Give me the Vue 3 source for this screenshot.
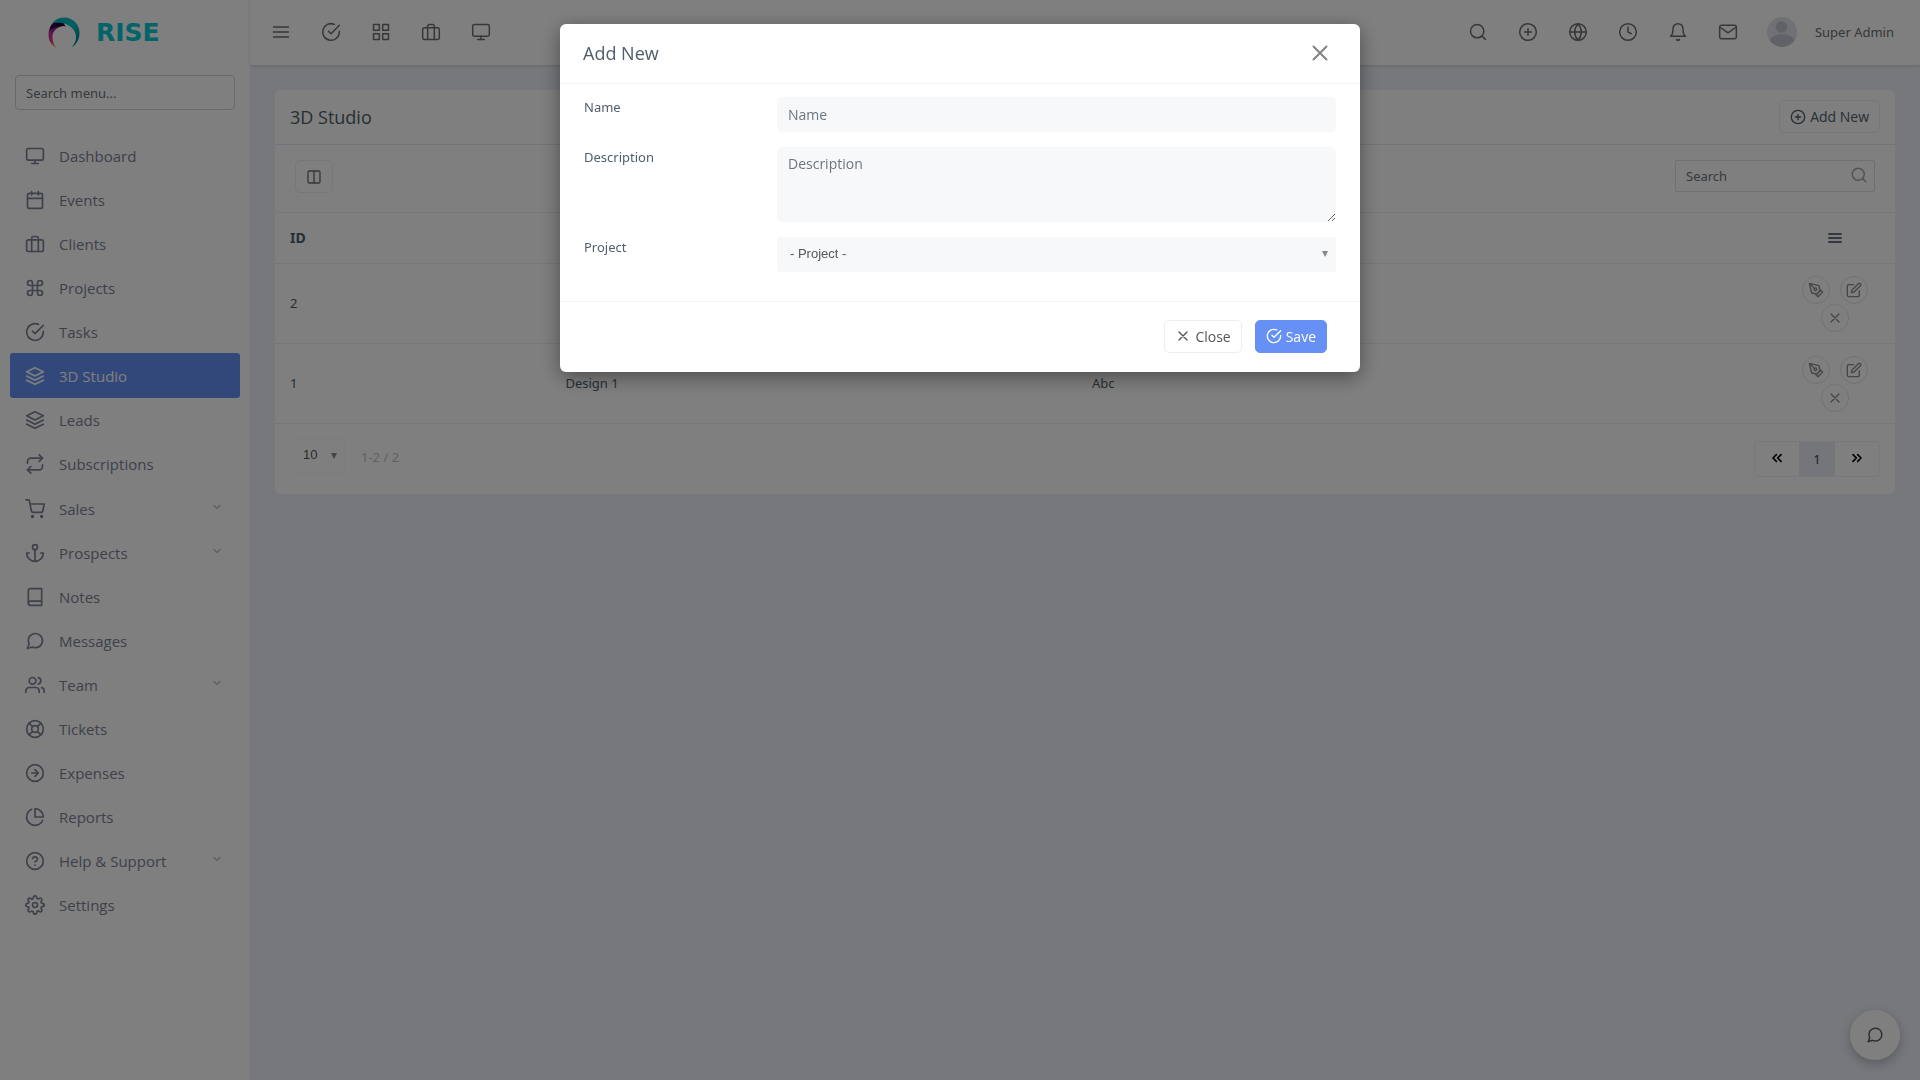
<template>
    <div class="page">
        <aside class="sidebar">
            <a href="#" class="brand">
                <svg class="brand-mark" viewBox="0 0 32 32" aria-hidden="true">
                    <defs>
                        <linearGradient id="ringLeft" x1="0" y1="0" x2="0" y2="1">
                            <stop offset="0" stop-color="#2a0a4a"/>
                            <stop offset="0.4" stop-color="#b0359c"/>
                            <stop offset="0.75" stop-color="#f0308c"/>
                            <stop offset="1" stop-color="#ffc31e"/>
                        </linearGradient>
                        <linearGradient id="ringRight" x1="0" y1="0" x2="1" y2="1">
                            <stop offset="0" stop-color="#00b4b4"/>
                            <stop offset="0.5" stop-color="#00c0c0"/>
                            <stop offset="1" stop-color="#00708c"/>
                        </linearGradient>
                    </defs>
                    <path fill="url(#ringLeft)" d="M8.500 31C2.500 28 .5 22.500.5 17.500.5 12 2.500 8 6 5l10 1 1 3C9 9.500 4.500 14 4.500 20c0 4.500 1.500 8 4 11z"/>
                    <path fill="#26003c" d="M3 9c2-3 4-4.500 7-6l8 6.500C13 8.500 8 9 2 13z"/>
                    <path fill="url(#ringRight)" d="M4 6.500C7 2.500 11 .5 16 .5c9 0 15.500 7 15.500 15.500 0 6.500-3 11.500-8 14.500 3-3.500 4.500-7 4.500-10.500C28 12.500 21 7 13.500 6 10 5.500 7 5.700 4 6.500z"/>
                </svg>
                <span>RISE</span>
            </a>
            <div class="menu-search">
                <input type="text" placeholder="Search menu..." aria-label="Search menu">
            </div>
            <nav class="menu">
                <a v-for="item in menu"
                   :key="item.label"
                   href="#"
                   :class="['menu-item', { active: item.label === activeMenu, spaced: item.spaced }]"
                   @click.prevent="activeMenu = item.label"
                >
                    <svg class="icon" viewBox="0 0 24 24" v-html="icons[item.icon]"></svg>
                    <span>{{ item.label }}</span>
                    <svg v-if="item.children" class="icon caret" viewBox="0 0 24 24" v-html="icons.chevronDown"></svg>
                </a>
            </nav>
        </aside>

        <div class="main">
            <header class="topbar">
                <button v-for="name in leftTools" :key="name" class="tool" :aria-label="name">
                    <svg class="icon" viewBox="0 0 24 24" v-html="icons[name]"></svg>
                </button>
                <div class="spacer"></div>
                <button v-for="name in rightTools" :key="name" class="tool" :aria-label="name">
                    <svg class="icon" viewBox="0 0 24 24" v-html="icons[name]"></svg>
                </button>
                <a href="#" class="user">
                    <svg class="avatar" viewBox="0 0 30 30" aria-hidden="true">
                        <clipPath id="avatarClip"><circle cx="15" cy="15" r="15"/></clipPath>
                        <g clip-path="url(#avatarClip)">
                            <rect width="30" height="30" fill="#e0e2e9"/>
                            <circle cx="14.500" cy="10" r="5.800" fill="#c2c5cf"/>
                            <ellipse cx="15" cy="27" rx="13.500" ry="10" fill="#c2c5cf"/>
                        </g>
                    </svg>
                    <span>Super Admin</span>
                </a>
            </header>

            <main class="content">
                <section class="card">
                    <div class="card-header">
                        <h1>3D Studio</h1>
                        <button class="btn" @click="showModal = true">
                            <svg class="icon" viewBox="0 0 24 24" v-html="icons.plusCircle"></svg>
                            Add New
                        </button>
                    </div>
                    <div class="toolbar">
                        <button class="btn columns-btn" aria-label="Columns">
                            <svg class="icon" viewBox="0 0 24 24" v-html="icons.columns"></svg>
                        </button>
                        <div class="table-search">
                            <input v-model="keyword" type="text" placeholder="Search" aria-label="Search">
                            <svg class="icon" viewBox="0 0 24 24" v-html="icons.search"></svg>
                        </div>
                    </div>
                    <table>
                        <thead>
                            <tr>
                                <th class="col-id">ID</th>
                                <th class="col-title"></th>
                                <th></th>
                                <th class="col-actions">
                                    <svg class="icon" viewBox="0 0 24 24" v-html="icons.menu"></svg>
                                </th>
                            </tr>
                        </thead>
                        <tbody>
                            <tr v-for="row in rows" :key="row.id">
                                <td>{{ row.id }}</td>
                                <td>{{ row.title }}</td>
                                <td>{{ row.description }}</td>
                                <td class="actions-cell">
                                    <div class="actions">
                                        <button v-for="name in rowActions" :key="name" :aria-label="name">
                                            <svg class="icon" viewBox="0 0 24 24" v-html="icons[name]"></svg>
                                        </button>
                                    </div>
                                </td>
                            </tr>
                        </tbody>
                    </table>
                    <div class="card-footer">
                        <div class="select-box page-size">
                            <select v-model="pageSize" aria-label="Page size">
                                <option>10</option>
                            </select>
                            <svg class="arrow" viewBox="0 0 6 6"><path d="M0 0h6L3 6z"/></svg>
                        </div>
                        <span class="range">1-2 / 2</span>
                        <div class="pagination">
                            <button aria-label="Previous">
                                <svg class="icon" viewBox="0 0 24 24" v-html="icons.chevronsLeft"></svg>
                            </button>
                            <button class="current">1</button>
                            <button aria-label="Next">
                                <svg class="icon" viewBox="0 0 24 24" v-html="icons.chevronsRight"></svg>
                            </button>
                        </div>
                    </div>
                </section>
            </main>
        </div>

        <button class="chat" aria-label="Chat">
            <svg class="icon" viewBox="0 0 24 24" v-html="icons.message"></svg>
        </button>

        <div v-if="showModal" class="overlay">
            <form class="modal" role="dialog" aria-labelledby="modalTitle" @submit.prevent="save">
                <div class="modal-header">
                    <h2 id="modalTitle">Add New</h2>
                    <button type="button" class="modal-x" aria-label="Dismiss" @click="showModal = false">
                        <svg class="icon" viewBox="0 0 24 24" v-html="icons.x"></svg>
                    </button>
                </div>
                <div class="modal-body">
                    <div class="field">
                        <label for="name">Name</label>
                        <input id="name" v-model="form.name" type="text" placeholder="Name">
                    </div>
                    <div class="field">
                        <label for="description">Description</label>
                        <textarea id="description" v-model="form.description" placeholder="Description"></textarea>
                    </div>
                    <div class="field">
                        <label for="project">Project</label>
                        <div class="select-box">
                            <select id="project" v-model="form.project">
                                <option value="">- Project -</option>
                            </select>
                            <svg class="arrow" viewBox="0 0 6 6"><path d="M0 0h6L3 6z"/></svg>
                        </div>
                    </div>
                </div>
                <div class="modal-footer">
                    <button type="button" class="btn" @click="showModal = false">
                        <svg class="icon" viewBox="0 0 24 24" v-html="icons.x"></svg>
                        Close
                    </button>
                    <button type="submit" class="btn primary">
                        <svg class="icon" viewBox="0 0 24 24" v-html="icons.checkCircle"></svg>
                        Save
                    </button>
                </div>
            </form>
        </div>
    </div>
</template>

<script setup>
    import { reactive, ref } from 'vue';

    const icons = {
        menu: '<path d="M3 12h18M3 6h18M3 18h18"/>',
        monitor: '<rect x="2" y="3" width="20" height="14" rx="2"/><path d="M8 21h8M12 17v4"/>',
        calendar: '<rect x="3" y="4" width="18" height="18" rx="2"/><path d="M16 2v4M8 2v4M3 10h18"/>',
        briefcase: '<rect x="2" y="7" width="20" height="14" rx="2"/><path d="M16 21V5a2 2 0 0 0-2-2h-4a2 2 0 0 0-2 2v16"/>',
        command: '<path d="M18 3a3 3 0 0 0-3 3v12a3 3 0 0 0 3 3 3 3 0 0 0 3-3 3 3 0 0 0-3-3H6a3 3 0 0 0-3 3 3 3 0 0 0 3 3 3 3 0 0 0 3-3V6a3 3 0 0 0-3-3 3 3 0 0 0-3 3 3 3 0 0 0 3 3h12a3 3 0 0 0 3-3 3 3 0 0 0-3-3z"/>',
        checkCircle: '<path d="M22 11.080V12a10 10 0 1 1-5.930-9.140"/><path d="M22 4L12 14.010l-3-3"/>',
        layers: '<path d="M12 2L2 7l10 5 10-5-10-5zM2 17l10 5 10-5M2 12l10 5 10-5"/>',
        repeat: '<path d="M17 1l4 4-4 4"/><path d="M3 11V9a4 4 0 0 1 4-4h14M7 23l-4-4 4-4"/><path d="M21 13v2a4 4 0 0 1-4 4H3"/>',
        cart: '<circle cx="9" cy="21" r="1"/><circle cx="20" cy="21" r="1"/><path d="M1 1h4l2.680 13.390a2 2 0 0 0 2 1.610h9.720a2 2 0 0 0 2-1.610L23 6H6"/>',
        anchor: '<circle cx="12" cy="5" r="3"/><path d="M12 22V8M5 12H2a10 10 0 0 0 20 0h-3"/>',
        book: '<path d="M4 19.500A2.500 2.500 0 0 1 6.500 17H20"/><path d="M6.500 2H20v20H6.500A2.500 2.500 0 0 1 4 19.500v-15A2.500 2.500 0 0 1 6.500 2z"/>',
        message: '<path d="M21 11.500a8.380 8.380 0 0 1-.9 3.800 8.500 8.500 0 0 1-7.600 4.700 8.380 8.380 0 0 1-3.800-.9L3 21l1.900-5.700a8.380 8.380 0 0 1-.9-3.800 8.500 8.500 0 0 1 4.700-7.600 8.380 8.380 0 0 1 3.800-.9h.5a8.480 8.480 0 0 1 8 8v.5z"/>',
        users: '<path d="M17 21v-2a4 4 0 0 0-4-4H5a4 4 0 0 0-4 4v2"/><circle cx="9" cy="7" r="4"/><path d="M23 21v-2a4 4 0 0 0-3-3.870M16 3.130a4 4 0 0 1 0 7.750"/>',
        lifeBuoy: '<circle cx="12" cy="12" r="10"/><circle cx="12" cy="12" r="4"/><path d="M4.930 4.930l4.240 4.240M14.830 14.830l4.240 4.240M14.830 9.170l4.240-4.240M4.930 19.070l4.240-4.240"/>',
        arrowRight: '<circle cx="12" cy="12" r="10"/><path d="M12 16l4-4-4-4M8 12h8"/>',
        pie: '<path d="M21.210 15.890A10 10 0 1 1 8 2.830"/><path d="M22 12A10 10 0 0 0 12 2v10z"/>',
        help: '<circle cx="12" cy="12" r="10"/><path d="M9.090 9a3 3 0 0 1 5.830 1c0 2-3 3-3 3M12 17h.010"/>',
        settings: '<circle cx="12" cy="12" r="3"/><path d="M19.400 15a1.650 1.650 0 0 0 .33 1.820l.06.06a2 2 0 0 1 0 2.830 2 2 0 0 1-2.830 0l-.06-.06a1.650 1.650 0 0 0-1.820-.33 1.650 1.650 0 0 0-1 1.510V21a2 2 0 0 1-2 2 2 2 0 0 1-2-2v-.09A1.650 1.650 0 0 0 9 19.400a1.650 1.650 0 0 0-1.820.33l-.06.06a2 2 0 0 1-2.830 0 2 2 0 0 1 0-2.830l.06-.06a1.650 1.650 0 0 0 .33-1.820 1.650 1.650 0 0 0-1.510-1H3a2 2 0 0 1-2-2 2 2 0 0 1 2-2h.09A1.650 1.650 0 0 0 4.600 9a1.650 1.650 0 0 0-.33-1.820l-.06-.06a2 2 0 0 1 0-2.830 2 2 0 0 1 2.830 0l.06.06a1.650 1.650 0 0 0 1.820.33H9a1.650 1.650 0 0 0 1-1.510V3a2 2 0 0 1 2-2 2 2 0 0 1 2 2v.09a1.650 1.650 0 0 0 1 1.510 1.650 1.650 0 0 0 1.820-.33l.06-.06a2 2 0 0 1 2.830 0 2 2 0 0 1 0 2.830l-.06.06a1.650 1.650 0 0 0-.33 1.820V9a1.650 1.650 0 0 0 1.510 1H21a2 2 0 0 1 2 2 2 2 0 0 1-2 2h-.09a1.650 1.650 0 0 0-1.510 1z"/>',
        chevronDown: '<path d="M6 9l6 6 6-6"/>',
        chevronsLeft: '<path d="M11 17l-5-5 5-5M18 17l-5-5 5-5"/>',
        chevronsRight: '<path d="M13 17l5-5-5-5M6 17l5-5-5-5"/>',
        grid: '<path d="M3 3h7v7H3zM14 3h7v7h-7zM14 14h7v7h-7zM3 14h7v7H3z"/>',
        search: '<circle cx="11" cy="11" r="8"/><path d="M21 21l-4.350-4.350"/>',
        plusCircle: '<circle cx="12" cy="12" r="10"/><path d="M12 8v8M8 12h8"/>',
        globe: '<circle cx="12" cy="12" r="10"/><path d="M2 12h20"/><path d="M12 2a15.300 15.300 0 0 1 4 10 15.300 15.300 0 0 1-4 10 15.300 15.300 0 0 1-4-10 15.300 15.300 0 0 1 4-10z"/>',
        clock: '<circle cx="12" cy="12" r="10"/><path d="M12 6v6l4 2"/>',
        bell: '<path d="M18 8A6 6 0 0 0 6 8c0 7-3 9-3 9h18s-3-2-3-9M13.730 21a2 2 0 0 1-3.460 0"/>',
        mail: '<path d="M4 4h16c1.100 0 2 .9 2 2v12c0 1.100-.9 2-2 2H4c-1.100 0-2-.9-2-2V6c0-1.100.9-2 2-2z"/><path d="M22 6l-10 7L2 6"/>',
        columns: '<path d="M12 3h7a2 2 0 0 1 2 2v14a2 2 0 0 1-2 2h-7m0-18H5a2 2 0 0 0-2 2v14a2 2 0 0 0 2 2h7m0-18v18"/>',
        pen: '<path d="M12 19l7-7 3 3-7 7-3-3z"/><path d="M18 13l-1.500-7.500L2 2l3.500 14.500L13 18l5-5zM2 2l7.586 7.586"/><circle cx="11" cy="11" r="2"/>',
        edit: '<path d="M11 4H4a2 2 0 0 0-2 2v14a2 2 0 0 0 2 2h14a2 2 0 0 0 2-2v-7"/><path d="M18.500 2.500a2.121 2.121 0 0 1 3 3L12 15l-4 1 1-4 9.500-9.500z"/>',
        x: '<path d="M18 6L6 18M6 6l12 12"/>'
    };

    const menu = [
        {label: 'Dashboard', icon: 'monitor'},
        {label: 'Events', icon: 'calendar'},
        {label: 'Clients', icon: 'briefcase'},
        {label: 'Projects', icon: 'command'},
        {label: 'Tasks', icon: 'checkCircle'},
        {label: '3D Studio', icon: 'layers'},
        {label: 'Leads', icon: 'layers'},
        {label: 'Subscriptions', icon: 'repeat'},
        {label: 'Sales', icon: 'cart', children: true, spaced: true},
        {label: 'Prospects', icon: 'anchor', children: true},
        {label: 'Notes', icon: 'book'},
        {label: 'Messages', icon: 'message'},
        {label: 'Team', icon: 'users', children: true},
        {label: 'Tickets', icon: 'lifeBuoy'},
        {label: 'Expenses', icon: 'arrowRight'},
        {label: 'Reports', icon: 'pie'},
        {label: 'Help & Support', icon: 'help', children: true},
        {label: 'Settings', icon: 'settings'}
    ];

    const leftTools = ['menu', 'checkCircle', 'grid', 'briefcase', 'monitor'];
    const rightTools = ['search', 'plusCircle', 'globe', 'clock', 'bell', 'mail'];
    const rowActions = ['pen', 'edit', 'x'];

    const rows = ref([
        {id: 2, title: '', description: ''},
        {id: 1, title: 'Design 1', description: 'Abc'}
    ]);

    const activeMenu = ref('3D Studio');
    const keyword = ref('');
    const pageSize = ref('10');
    const showModal = ref(true);
    const form = reactive({name: '', description: '', project: ''});

    const save = () => {
        rows.value.unshift({
            id: rows.value.length + 1,
            title: form.name,
            description: form.description
        });
        showModal.value = false;
    };
</script>

<style>
    body {
        background-color: #eef1f9;
    }
</style>

<style scoped>
    .page,
    .page * {
        box-sizing: border-box;
    }

    .page {
        display: grid;
        grid-template-columns: 250px 1fr;
        min-height: 100vh;
        font-family: "Noto Sans", "Open Sans", sans-serif;
        font-size: 13px;
        line-height: 20px;
        color: #4e5e6a;
    }

    button,
    input,
    textarea {
        font-family: inherit;
        color: inherit;
    }

    button {
        padding: 0;
        border: 0;
        background: none;
        cursor: pointer;
    }

    a {
        color: inherit;
        text-decoration: none;
    }

    h1,
    h2 {
        margin: 0;
        font-family: "Open Sans", sans-serif;
        font-size: 18px;
        font-weight: 400;
        line-height: 24px;
    }

    .icon {
        display: block;
        flex: none;
        width: 16px;
        height: 16px;
        fill: none;
        stroke: currentColor;
        stroke-width: 2;
        stroke-linecap: round;
        stroke-linejoin: round;
    }

    /* 侧边栏 */
    .sidebar {
        background-color: #fff;
    }

    .brand {
        display: flex;
        align-items: center;
        gap: 16px;
        height: 64px;
        padding: 2px 0 0 48px;
        font-family: "DejaVu Sans", sans-serif;
        font-size: 25px;
        font-weight: 700;
        color: #00c8d0;
    }

    .brand-mark {
        width: 32px;
        height: 32px;
    }

    .menu-search {
        padding: 11px 15px 23px;
    }

    .menu-search input {
        display: block;
        width: 100%;
        height: 35px;
        padding: 0 10px;
        border: 1px solid #ced4da;
        border-radius: 4px;
        font-size: 13px;
        background: none;
    }

    .menu {
        padding: 0 10px;
    }

    .menu-item {
        display: flex;
        align-items: center;
        gap: 14px;
        height: 45px;
        margin-bottom: -1px;
        padding: 0 15px;
        border-radius: 3px;
        font-family: "Open Sans", sans-serif;
        font-size: 15px;
        color: #7d8194;
    }

    .menu-item.spaced {
        margin-top: 1px;
    }

    .menu-item.active {
        background-color: #6690f4;
        color: #fff;
    }

    .menu-item .icon,
    .tool .icon {
        width: 20px;
        height: 20px;
    }

    .menu-item .caret {
        width: 12px;
        height: 12px;
        margin: 0 2px 4px auto;
    }

    /* 顶部栏 */
    .topbar {
        display: flex;
        align-items: center;
        height: 65px;
        padding: 0 26px 1px 6px;
        background-color: #fff;
        box-shadow: 0 1px 3px rgba(0, 0, 0, 0.15);
        color: #6b6e70;
    }

    .tool {
        display: flex;
        justify-content: center;
        width: 50px;
    }

    .tool .icon {
        stroke-width: 1.800;
    }

    .spacer {
        flex: 1;
    }

    .user {
        display: flex;
        align-items: center;
        gap: 18px;
        margin-left: 14px;
    }

    .avatar {
        width: 30px;
        height: 30px;
    }

    /* 内容卡片 */
    .content {
        padding: 25px;
    }

    .card {
        border-radius: 6px;
        background-color: #fff;
    }

    .card-header {
        display: flex;
        align-items: center;
        justify-content: space-between;
        height: 55px;
        padding: 0 15px 1px;
        border-bottom: 1px solid #e4e8f4;
    }

    .btn {
        display: flex;
        align-items: center;
        gap: 4px;
        height: 33px;
        padding: 0 10px;
        border: 1px solid #eceef1;
        border-radius: 5px;
        font-family: "Open Sans", sans-serif;
        font-size: 14px;
    }

    .toolbar {
        display: flex;
        justify-content: space-between;
        padding: 15px 20px 19px;
        border-bottom: 1px solid #eef0f2;
    }

    .columns-btn {
        color: #6b6e70;
    }

    .table-search {
        position: relative;
        width: 200px;
    }

    .table-search input {
        width: 100%;
        height: 32px;
        padding: 0 10px;
        border: 1px solid #dde1ec;
        border-radius: 2px;
        font-size: 13px;
        background: none;
    }

    .table-search .icon {
        position: absolute;
        top: 6px;
        right: 7px;
        width: 18px;
        height: 18px;
        color: #9ea4ae;
    }

    table {
        width: 100%;
        border-collapse: separate;
        border-spacing: 0;
        table-layout: fixed;
    }

    th,
    td {
        padding: 0 15px;
        border-bottom: 1px solid #edeff1;
        text-align: left;
    }

    th {
        height: 51px;
        font-size: 14px;
        font-weight: 700;
    }

    td {
        height: 80px;
        padding-bottom: 2px;
    }

    .actions-cell {
        padding-bottom: 0;
    }

    .col-id {
        width: 17%;
    }

    .col-title {
        width: 32.500%;
    }

    .col-actions {
        width: 120px;
    }

    .col-actions .icon {
        margin: 0 auto;
        stroke-width: 3;
        color: #6d7080;
    }

    .actions {
        display: flex;
        flex-wrap: wrap;
        justify-content: center;
        column-gap: 10px;
    }

    .actions button {
        display: flex;
        align-items: center;
        justify-content: center;
        width: 28px;
        height: 28px;
        border: 1px solid #e0e4f2;
        border-radius: 50%;
        color: #8b8d92;
    }

    .card-footer {
        display: flex;
        align-items: flex-start;
        padding: 15px 15px 17px;
    }

    .select-box {
        position: relative;
    }

    .select-box select {
        display: block;
        width: 100%;
        height: 35px;
        padding: 0 13px 2px;
        border: 0;
        border-radius: 3px;
        appearance: none;
        font-family: "Liberation Sans", sans-serif;
        font-size: 13px;
        color: #555;
    }

    .select-box .arrow {
        position: absolute;
        top: 14px;
        right: 8px;
        width: 6px;
        height: 6px;
        fill: #888;
        pointer-events: none;
    }

    .page-size {
        width: 55px;
    }

    .page-size select {
        padding: 0 12px 4px;
        border: 1px solid #f8f9fa;
        background: none;
    }

    .range {
        padding: 8px 16px;
        color: #c0c4c8;
    }

    .pagination {
        display: flex;
        margin: 2px 0 0 auto;
        border: 1px solid #f0f2f5;
        border-radius: 3px;
    }

    .pagination button {
        display: flex;
        align-items: center;
        justify-content: center;
        width: 44px;
        height: 34px;
        font-size: 13px;
        color: #000;
    }

    .pagination .icon {
        margin-bottom: 2px;
        stroke-width: 2.500;
    }

    .pagination .current {
        width: 36px;
        background-color: #ebedf2;
        color: #2f4256;
    }

    .chat {
        position: fixed;
        right: 20px;
        bottom: 20px;
        display: flex;
        align-items: center;
        justify-content: center;
        width: 50px;
        height: 50px;
        border-radius: 50%;
        background-color: #fff;
        box-shadow: 0 4px 12px rgba(0, 0, 0, 0.25);
    }

    .chat .icon {
        width: 18px;
        height: 18px;
    }

    /* 弹窗 */
    .overlay {
        position: fixed;
        inset: 0;
        padding: 24px;
        background-color: rgba(0, 0, 0, 0.5);
        overflow: auto;
    }

    .modal {
        max-width: 800px;
        margin: 0 auto;
        border-radius: 6px;
        background-color: #fff;
        box-shadow: 0 5px 20px rgba(0, 0, 0, 0.4);
    }

    .modal-header {
        display: flex;
        align-items: center;
        justify-content: space-between;
        height: 60px;
        padding: 0 27px 2px 23px;
        border-bottom: 1px solid #f2f4f6;
    }

    .modal-x {
        color: #808080;
    }

    .modal-x .icon {
        width: 26px;
        height: 26px;
        stroke-width: 1.800;
    }

    .modal-body {
        display: flex;
        flex-direction: column;
        gap: 15px;
        padding: 13px 24px 29px;
    }

    .field {
        display: grid;
        grid-template-columns: 193px 1fr;
    }

    .field input,
    .field textarea {
        display: block;
        width: 100%;
        height: 35px;
        padding: 0 11px;
        border: 0;
        border-radius: 5px;
        font-family: "Open Sans", sans-serif;
        font-size: 14px;
        line-height: 20px;
        background-color: #f6f8fa;
    }

    .field textarea {
        height: 75px;
        padding: 7px 11px;
        resize: vertical;
    }

    .field select {
        background-color: #f6f8fa;
    }

    ::placeholder {
        color: #6c757d;
        opacity: 1;
    }

    .modal-footer {
        display: flex;
        align-items: center;
        justify-content: flex-end;
        gap: 13px;
        height: 71px;
        padding: 0 33px 2px;
        border-top: 1px solid #f2f4f6;
    }

    .modal-footer .btn {
        color: #555;
    }

    .modal-footer .primary {
        border-color: #6690f4;
        background-color: #6690f4;
        color: #fff;
    }
</style>
